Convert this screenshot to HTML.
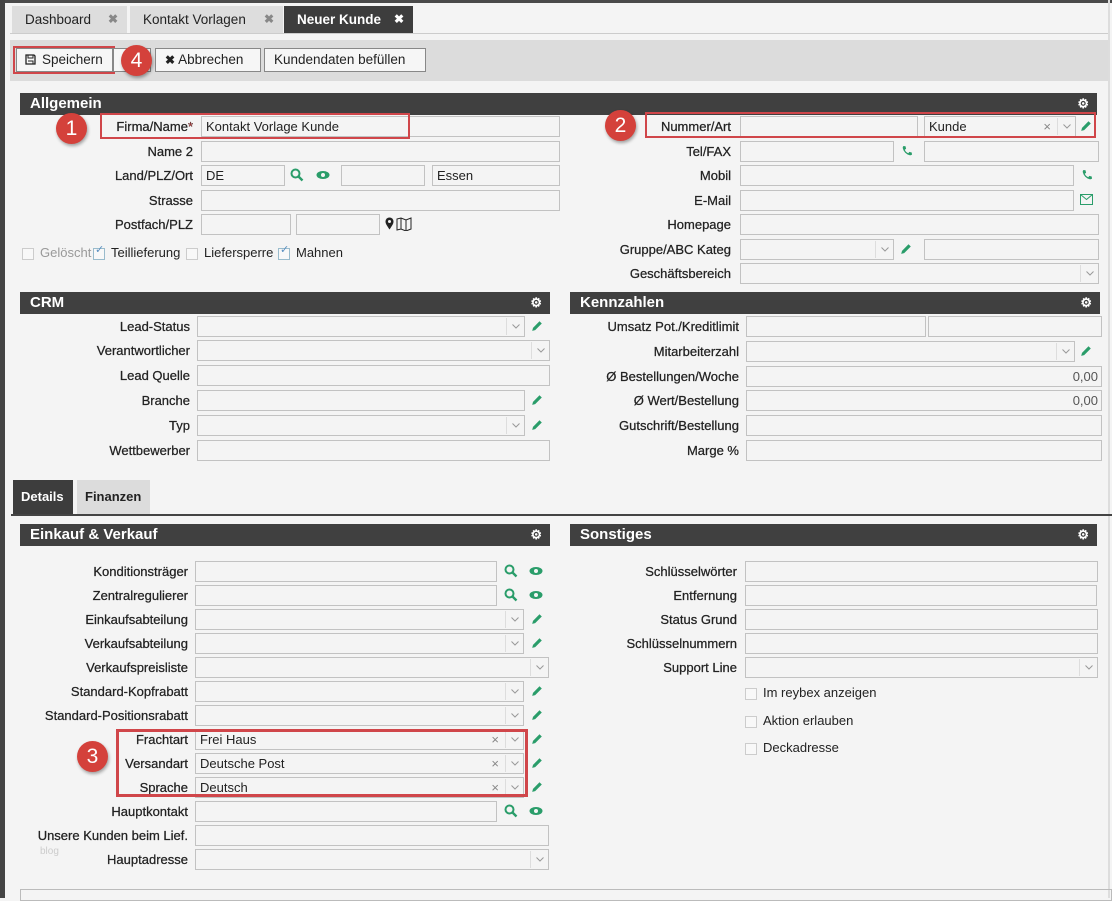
<!DOCTYPE html>
<html><head><meta charset="utf-8"><style>
*{box-sizing:border-box;margin:0;padding:0}
body{width:1112px;height:898px;overflow:hidden;background:#f4f4f4;font-family:"Liberation Sans",sans-serif;font-size:13px;color:#222;position:relative}
div,span,svg{position:absolute}
.l{left:0;text-align:right;white-space:nowrap;height:20px;line-height:21px;-webkit-text-stroke:0.25px #222}
.i{height:21px;border:1px solid #c2c2c2;background:#f4f4f4;line-height:20px;padding-left:4px;white-space:nowrap}
.s::after{content:"";position:absolute;right:0;top:1px;bottom:1px;width:17px;border-left:1px solid #ddd;background:no-repeat center/8px 5px url("data:image/svg+xml,%3Csvg xmlns='http://www.w3.org/2000/svg' viewBox='0 0 8 5'%3E%3Cpath d='M0.5 0.5L4 4L7.5 0.5' fill='none' stroke='%23999'/%3E%3C/svg%3E")}
.x{right:24px;top:0;color:#888;font-size:13px}
.h{height:22px;background:#404040;color:#fff;font-weight:bold;font-size:15px;line-height:22px;padding-left:10px}
.g{right:8px;top:0;font-size:13px;color:#fff}
.tab{top:6px;height:27px;background:#dddddd;line-height:27px;padding-left:13px;font-size:13.5px}
.tab b{position:absolute;right:9px;top:0;color:#888;font-size:12px}
.btn{top:48px;height:24px;border:1px solid #888;background:#f6f6f6;line-height:22px;padding:0 9px;font-size:13.5px;white-space:nowrap}
.c{width:31px;height:31px;border-radius:50%;background:#d4413b;color:#fff;font-size:21px;line-height:31px;text-align:center;box-shadow:1px 2px 3px rgba(0,0,0,.35)}
.rb{border:3px solid #d0464a}
.cb{width:12px;height:12px;border:1px solid #ccc;background:#f8f8f8}
.v{text-align:right;padding-right:3px;color:#555}
</style></head><body>
<svg width="0" height="0" style="position:absolute"><defs>
<symbol id="pen" viewBox="0 0 12 12"><path d="M8.5 1.2l2.3 2.3-6.6 6.6-3 .8.8-3z" fill="#2a9d6a"/></symbol>
<symbol id="srch" viewBox="0 0 14 14"><circle cx="5.5" cy="5.5" r="4" fill="none" stroke="#2a9d6a" stroke-width="2"/><path d="M8.5 8.5l4 4" stroke="#2a9d6a" stroke-width="2.4"/></symbol>
<symbol id="eye" viewBox="0 0 14 14"><ellipse cx="7" cy="7" rx="6.5" ry="4" fill="#2a9d6a"/><circle cx="7" cy="7" r="2" fill="#f4f4f4"/></symbol>
<symbol id="ph" viewBox="0 0 12 12"><path d="M2.5 1l2 .3.6 2.4-1.3 1a6 6 0 0 0 3.5 3.5l1-1.3 2.4.6.3 2c-.5.6-1.4.9-2.3.7A9 9 0 0 1 1.8 3.3c-.2-.9.1-1.8.7-2.3z" fill="#2a9d6a"/></symbol>
</defs></svg>
<div style="left:0;top:0;width:1112px;height:3px;background:#4a4a4a"></div>
<div style="left:0;top:0;width:5px;height:898px;background:#444"></div>
<div style="left:1108px;top:0;width:2px;height:898px;background:#ddd"></div>

<div class="tab" style="left:12px;width:115px">Dashboard<b>✖</b></div>
<div class="tab" style="left:130px;width:153px">Kontakt Vorlagen<b>✖</b></div>
<div class="tab" style="left:284px;width:129px;background:#3d3d3d;color:#fff;font-weight:bold">Neuer Kunde<b style="color:#fff">✖</b></div>
<div style="left:10px;top:33px;width:1098px;height:1px;background:#ccc"></div>

<div style="left:10px;top:40px;width:1098px;height:41px;background:#dcdcdc"></div>
<div class="btn" style="left:16px;width:97px;padding-left:8px"><svg style="left:8px;top:5px" width="11" height="11" viewBox="0 0 11 11"><path d="M1 1h8l1 1v8H1z" fill="none" stroke="#222" stroke-width="1.3"/><path d="M3 1v3h5V1M3 7h5v3" fill="none" stroke="#222"/></svg><span style="left:25px;top:0">Speichern</span></div>
<div class="rb" style="left:13px;top:46px;width:102px;height:28px;border-width:2px"></div>
<div class="btn" style="left:113px;width:38px"></div>
<div class="c" style="left:121px;top:45px">4</div>
<div class="btn" style="left:155px;width:106px"><b style="font-size:12px">✖</b> Abbrechen</div>
<div class="btn" style="left:264px;width:162px">Kundendaten befüllen</div>

<!-- Allgemein -->
<div class="h" style="left:20px;top:93px;width:1077px">Allgemein<span class="g">⚙</span></div>
<div class="l" style="top:116px;width:193px">Firma/Name<span style="position:static;color:#c33">*</span></div>
<div class="i" style="left:201px;top:116px;width:359px">Kontakt Vorlage Kunde</div>
<div class="rb" style="left:100px;top:113px;width:310px;height:26px;border-width:2px"></div>
<div class="c" style="left:56px;top:113px">1</div>
<div class="l" style="top:141px;width:193px">Name 2</div><div class="i" style="left:201px;top:141px;width:359px"></div>
<div class="l" style="top:165px;width:193px">Land/PLZ/Ort</div><div class="i" style="left:201px;top:165px;width:84px">DE</div>
<svg width="14" height="14" style="left:290px;top:168px"><use href="#srch"/></svg>
<svg width="14" height="14" style="left:316px;top:168px"><use href="#eye"/></svg>
<div class="i" style="left:341px;top:165px;width:84px"></div><div class="i" style="left:432px;top:165px;width:128px">Essen</div>
<div class="l" style="top:190px;width:193px">Strasse</div><div class="i" style="left:201px;top:190px;width:359px"></div>
<div class="l" style="top:214px;width:193px">Postfach/PLZ</div><div class="i" style="left:201px;top:214px;width:90px"></div><div class="i" style="left:296px;top:214px;width:84px"></div>
<svg style="left:385px;top:217px" width="9" height="13" viewBox="0 0 9 13"><path d="M4.5 12.5C1.5 8 .5 6.5.5 4.5a4 4 0 0 1 8 0c0 2-1 3.5-4 8z" fill="#222"/><circle cx="4.5" cy="4.5" r="1.5" fill="#f4f4f4"/></svg>
<svg style="left:396px;top:217px" width="16" height="14" viewBox="0 0 16 14"><path d="M1 2l4-1 5 2 5-2v11l-5 2-5-2-4 1z M5 1v11 M10 3v11" fill="none" stroke="#222"/></svg>
<div class="cb" style="left:22px;top:248px"></div><span style="left:40px;top:245px;color:#999">Gelöscht</span>
<div class="cb" style="left:93px;top:248px;border-color:#9bc"></div><span style="left:95px;top:243px;color:#5a8fc0;font-size:11px">✓</span><span style="left:111px;top:245px">Teillieferung</span>
<div class="cb" style="left:186px;top:248px"></div><span style="left:204px;top:245px">Liefersperre</span>
<div class="cb" style="left:278px;top:248px;border-color:#9bc"></div><span style="left:280px;top:243px;color:#5a8fc0;font-size:11px">✓</span><span style="left:296px;top:245px">Mahnen</span>

<div class="l" style="top:116px;left:560px;width:171px">Nummer/Art</div><div class="i" style="left:740px;top:116px;width:178px"></div>
<div class="i s" style="left:924px;top:116px;width:152px">Kunde<span class="x">×</span></div>
<div class="rb" style="left:645px;top:112px;width:451px;height:26px;border-width:2px"></div>
<div class="c" style="left:605px;top:110px">2</div>
<svg width="12" height="12" style="left:1080px;top:120px"><use href="#pen"/></svg>
<div class="l" style="top:141px;left:560px;width:171px">Tel/FAX</div><div class="i" style="left:740px;top:141px;width:154px"></div><svg width="12" height="12" style="left:901px;top:145px"><use href="#ph"/></svg><div class="i" style="left:924px;top:141px;width:175px"></div>
<div class="l" style="top:165px;left:560px;width:171px">Mobil</div><div class="i" style="left:740px;top:165px;width:334px"></div><svg width="12" height="12" style="left:1081px;top:169px"><use href="#ph"/></svg>
<div class="l" style="top:190px;left:560px;width:171px">E-Mail</div><div class="i" style="left:740px;top:190px;width:334px"></div><svg style="left:1080px;top:194px" width="13" height="11" viewBox="0 0 13 11"><rect x=".5" y=".5" width="12" height="10" fill="none" stroke="#2a9d6a"/><path d="M.5 .5l6 5 6-5" fill="none" stroke="#2a9d6a"/></svg>
<div class="l" style="top:214px;left:560px;width:171px">Homepage</div><div class="i" style="left:740px;top:214px;width:359px"></div>
<div class="l" style="top:239px;left:560px;width:171px">Gruppe/ABC Kateg</div><div class="i s" style="left:740px;top:239px;width:154px"></div><svg width="12" height="12" style="left:900px;top:243px"><use href="#pen"/></svg><div class="i" style="left:924px;top:239px;width:175px"></div>
<div class="l" style="top:263px;left:560px;width:171px">Geschäftsbereich</div><div class="i s" style="left:740px;top:263px;width:359px"></div>

<!-- CRM -->
<div class="h" style="left:20px;top:292px;width:530px">CRM<span class="g">⚙</span></div>
<div class="l" style="top:316px;width:190px">Lead-Status</div><div class="i s" style="left:197px;top:316px;width:328px"></div><svg width="12" height="12" style="left:531px;top:320px"><use href="#pen"/></svg>
<div class="l" style="top:340px;width:190px">Verantwortlicher</div><div class="i s" style="left:197px;top:340px;width:353px"></div>
<div class="l" style="top:365px;width:190px">Lead Quelle</div><div class="i" style="left:197px;top:365px;width:353px"></div>
<div class="l" style="top:390px;width:190px">Branche</div><div class="i" style="left:197px;top:390px;width:328px"></div><svg width="12" height="12" style="left:531px;top:394px"><use href="#pen"/></svg>
<div class="l" style="top:415px;width:190px">Typ</div><div class="i s" style="left:197px;top:415px;width:328px"></div><svg width="12" height="12" style="left:531px;top:419px"><use href="#pen"/></svg>
<div class="l" style="top:440px;width:190px">Wettbewerber</div><div class="i" style="left:197px;top:440px;width:353px"></div>

<!-- Kennzahlen -->
<div class="h" style="left:570px;top:292px;width:530px">Kennzahlen<span class="g">⚙</span></div>
<div class="l" style="top:316px;left:560px;width:179px">Umsatz Pot./Kreditlimit</div><div class="i" style="left:746px;top:316px;width:180px"></div><div class="i" style="left:928px;top:316px;width:174px"></div>
<div class="l" style="top:341px;left:560px;width:179px">Mitarbeiterzahl</div><div class="i s" style="left:746px;top:341px;width:329px"></div><svg width="12" height="12" style="left:1080px;top:345px"><use href="#pen"/></svg>
<div class="l" style="top:366px;left:560px;width:179px">Ø Bestellungen/Woche</div><div class="i v" style="left:746px;top:366px;width:356px">0,00</div>
<div class="l" style="top:390px;left:560px;width:179px">Ø Wert/Bestellung</div><div class="i v" style="left:746px;top:390px;width:356px">0,00</div>
<div class="l" style="top:415px;left:560px;width:179px">Gutschrift/Bestellung</div><div class="i" style="left:746px;top:415px;width:356px"></div>
<div class="l" style="top:440px;left:560px;width:179px">Marge %</div><div class="i" style="left:746px;top:440px;width:356px"></div>

<!-- subtabs -->
<div style="left:13px;top:480px;width:60px;height:34px;background:#3d3d3d;color:#fff;font-weight:bold;line-height:34px;padding-left:8px">Details</div>
<div style="left:77px;top:480px;width:73px;height:34px;background:#dcdcdc;font-weight:bold;line-height:34px;padding-left:8px">Finanzen</div>
<div style="left:11px;top:514px;width:1101px;height:2px;background:#444"></div>

<!-- Einkauf -->
<div class="h" style="left:20px;top:524px;width:530px">Einkauf &amp; Verkauf<span class="g">⚙</span></div>
<div class="l" style="top:561px;width:188px">Konditionsträger</div><div class="i" style="left:195px;top:561px;width:302px"></div>
<div class="l" style="top:585px;width:188px">Zentralregulierer</div><div class="i" style="left:195px;top:585px;width:302px"></div>
<div class="l" style="top:609px;width:188px">Einkaufsabteilung</div><div class="i s" style="left:195px;top:609px;width:329px"></div>
<div class="l" style="top:633px;width:188px">Verkaufsabteilung</div><div class="i s" style="left:195px;top:633px;width:329px"></div>
<div class="l" style="top:657px;width:188px">Verkaufspreisliste</div><div class="i s" style="left:195px;top:657px;width:354px"></div>
<div class="l" style="top:681px;width:188px">Standard-Kopfrabatt</div><div class="i s" style="left:195px;top:681px;width:329px"></div>
<div class="l" style="top:705px;width:188px">Standard-Positionsrabatt</div><div class="i s" style="left:195px;top:705px;width:329px"></div>
<div class="l" style="top:729px;width:188px">Frachtart</div><div class="i s" style="left:195px;top:729px;width:329px">Frei Haus<span class="x">×</span></div>
<div class="l" style="top:753px;width:188px">Versandart</div><div class="i s" style="left:195px;top:753px;width:329px">Deutsche Post<span class="x">×</span></div>
<div class="l" style="top:777px;width:188px">Sprache</div><div class="i s" style="left:195px;top:777px;width:329px">Deutsch<span class="x">×</span></div>
<div class="rb" style="left:116px;top:729px;width:412px;height:68px;border-width:3px"></div>
<div class="c" style="left:77px;top:741px">3</div>
<div class="l" style="top:801px;width:188px">Hauptkontakt</div><div class="i" style="left:195px;top:801px;width:302px"></div>
<div class="l" style="top:825px;width:188px">Unsere Kunden beim Lief.</div><div class="i" style="left:195px;top:825px;width:354px"></div>
<div class="l" style="top:849px;width:188px">Hauptadresse</div><div class="i s" style="left:195px;top:849px;width:354px"></div>
<span style="left:40px;top:846px;color:#ccc;font-size:10px">blog</span>
<svg width="12" height="12" style="left:531px;top:613px"><use href="#pen"/></svg>
<svg width="12" height="12" style="left:531px;top:637px"><use href="#pen"/></svg>
<svg width="12" height="12" style="left:531px;top:685px"><use href="#pen"/></svg>
<svg width="12" height="12" style="left:531px;top:709px"><use href="#pen"/></svg>
<svg width="12" height="12" style="left:531px;top:733px"><use href="#pen"/></svg>
<svg width="12" height="12" style="left:531px;top:757px"><use href="#pen"/></svg>
<svg width="12" height="12" style="left:531px;top:781px"><use href="#pen"/></svg>
<svg width="14" height="14" style="left:504px;top:564px"><use href="#srch"/></svg>
<svg width="14" height="14" style="left:504px;top:588px"><use href="#srch"/></svg>
<svg width="14" height="14" style="left:504px;top:804px"><use href="#srch"/></svg>
<svg width="14" height="14" style="left:529px;top:564px"><use href="#eye"/></svg>
<svg width="14" height="14" style="left:529px;top:588px"><use href="#eye"/></svg>
<svg width="14" height="14" style="left:529px;top:804px"><use href="#eye"/></svg>

<!-- Sonstiges -->
<div class="h" style="left:570px;top:524px;width:527px">Sonstiges<span class="g">⚙</span></div>
<div class="l" style="top:561px;left:560px;width:177px">Schlüsselwörter</div><div class="i" style="left:745px;top:561px;width:353px"></div>
<div class="l" style="top:585px;left:560px;width:177px">Entfernung</div><div class="i" style="left:745px;top:585px;width:352px"></div>
<div class="l" style="top:609px;left:560px;width:177px">Status Grund</div><div class="i" style="left:745px;top:609px;width:353px"></div>
<div class="l" style="top:633px;left:560px;width:177px">Schlüsselnummern</div><div class="i" style="left:745px;top:633px;width:353px"></div>
<div class="l" style="top:657px;left:560px;width:177px">Support Line</div><div class="i s" style="left:745px;top:657px;width:353px"></div>
<div class="cb" style="left:745px;top:688px"></div><span style="left:763px;top:685px">Im reybex anzeigen</span>
<div class="cb" style="left:745px;top:716px"></div><span style="left:763px;top:713px">Aktion erlauben</span>
<div class="cb" style="left:745px;top:743px"></div><span style="left:763px;top:740px">Deckadresse</span>

<div style="left:20px;top:889px;width:1092px;height:12px;border:1px solid #bbb"></div>
</body></html>
